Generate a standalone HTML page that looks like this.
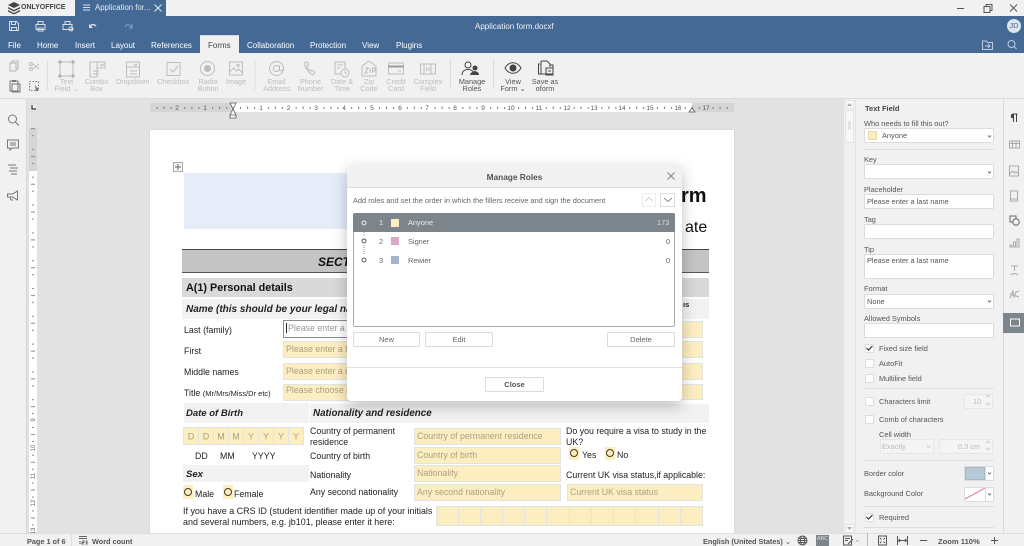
<!DOCTYPE html>
<html><head><meta charset="utf-8"><title>Application form.docxf</title>
<style>
html,body{margin:0;padding:0;width:1024px;height:546px;overflow:hidden;background:#e2e2e2}
#r{position:relative;width:1024px;height:546px;overflow:hidden;font-family:"Liberation Sans",sans-serif;font-size:7.400px;color:#444;filter:blur(.25px)}
.a{position:absolute}
.t{position:absolute;white-space:nowrap;line-height:10px}
.c{text-align:center}
.w{color:#fff}
.m{font-size:8px;color:#fff;top:41px}
.d{color:#bdbdbd}
.l{color:#555;margin-top:1px}
.tb{line-height:7px;font-size:7.300px;top:78px;margin-top:0}
.b{position:absolute;background:#fff;border:1px solid #dcdcdc;box-sizing:border-box;border-radius:1px}
.f{position:absolute;background:#fdeec2;box-sizing:border-box;border:1px solid #dfe6df;color:#aaa082;font-size:8.800px;line-height:15px;padding-left:2px;white-space:nowrap;overflow:hidden}
.x{font-size:8.800px;color:#222;margin-top:1px}
.cb{position:absolute;width:9px;height:9px;background:#fff;border:1px solid #ddd;box-sizing:border-box;border-radius:1px}
.hr{position:absolute;left:864px;width:130px;height:1px;background:#dedede}
.rd{position:absolute;background:#fdeec2}
.rd i{position:absolute;left:1px;top:3px;width:8px;height:8px;border:1px solid #443d20;border-radius:50%;box-sizing:border-box}
.btn{position:absolute;background:#fff;border:1px solid #dcdcdc;box-sizing:border-box;border-radius:1px;text-align:center;font-size:7.500px;line-height:13px;color:#666}
.s{font-size:7.300px;font-weight:bold;color:#555;top:537px}
svg{position:absolute;overflow:visible}
</style></head><body><div id="r">

<!-- top bar -->
<div class="a" style="left:0;top:0;width:1024px;height:16px;background:#f1f1f1"></div>
<div class="a" style="left:0;top:16px;width:1024px;height:37px;background:#446995"></div>
<div class="a" style="left:75px;top:0;width:91px;height:16px;background:#446995"></div>
<svg style="left:8px;top:2px" width="12" height="12" fill="#444"><path d="M6 0L12 3 6 6 0 3z"/><path d="M0 5l6 3 6-3v1.500L6 9.500 0 6.500z"/><path d="M0 8l6 3 6-3v1.500L6 12.500 0 9.500z"/></svg>
<div class="t" style="left:21px;top:3px;font-size:7px;font-weight:bold;color:#444">ONLYOFFICE</div>
<svg style="left:83px;top:4px" width="7" height="7" stroke="#d5dfea" fill="none"><path d="M0 1h7M0 3.500h7M0 6h7"/></svg>
<div class="t w" style="left:95px;top:3px;font-size:7.800px;color:#e4ebf3">Application for...</div>
<svg style="left:154px;top:3.500px" width="8" height="8" stroke="#dfe7f0" fill="none"><path d="M.5.5l7 7M7.500.5l-7 7"/></svg>
<svg style="left:957px;top:4px" width="60" height="10" stroke="#555" fill="none"><path d="M0 4.500h7"/><path d="M27 2.500h6v6h-6zM29 2.500v-2h6v6h-2"/><path d="M53 .5l7 7M60 .5l-7 7"/></svg>

<!-- quick access icons -->
<svg style="left:9px;top:21px" width="125" height="11" stroke="#d7e0ea" fill="none" stroke-width="1"><path d="M.5.5h7l2 2v7H.5z"/><path d="M2.500.5v3h4v-3M2.500 9.500v-3h5v3"/><path d="M27 3.500h9v5h-9zM29 3.500V.5h5v3M29 7h5v3h-5z"/><path d="M54 3.500h9v5h-9zM56 3.500V.5h5v3"/><circle cx="62" cy="8" r="2"/><path d="M81 6c1-3 4-3 6-1" stroke-width="1.500"/><path d="M80 3v4h4" stroke="none" fill="#d7e0ea"/><path d="M116 6c1-3 4-3 6 0" stroke="#8ba3bf"/><path d="M123 3v4h-3" stroke="#8ba3bf"/></svg>
<div class="t w" style="left:475px;top:22px;font-size:8px;color:#eef2f6">Application form.docxf</div>
<div class="a" style="left:1007px;top:19px;width:14px;height:14px;border-radius:50%;background:#dde4ee;color:#446995;font-size:7.500px;line-height:14px;text-align:center">JD</div>

<!-- menu -->
<div class="t m" style="left:8px">File</div>
<div class="t m" style="left:37px">Home</div>
<div class="t m" style="left:75px">Insert</div>
<div class="t m" style="left:111px">Layout</div>
<div class="t m" style="left:151px">References</div>
<div class="a" style="left:200px;top:35px;width:39px;height:18px;background:#f1f1f1;border-top:1px solid #cfd8e3;box-sizing:border-box"></div>
<div class="t m" style="left:208px;color:#444">Forms</div>
<div class="t m" style="left:247px">Collaboration</div>
<div class="t m" style="left:310px">Protection</div>
<div class="t m" style="left:362px">View</div>
<div class="t m" style="left:396px">Plugins</div>
<svg style="left:982px;top:40px" width="40" height="10" stroke="#bfcddd" fill="none"><path d="M.5 1h4l1 1.500h5v7H.5z"/><path d="M3 6h5M6 4l2 2-2 2"/><circle cx="29.500" cy="4" r="3.500"/><path d="M32 6.500l2.500 2.500"/></svg>

<!-- toolbar -->
<div class="a" style="left:0;top:53px;width:1024px;height:45px;background:#f1f1f1;border-bottom:1px solid #dcdcdc;box-sizing:content-box"></div>
<svg style="left:0;top:53px" width="620" height="45" fill="none" stroke="#bdbdbd">
<path d="M10 10h6v8h-6zM12 10V8h6v8h-2" stroke="#b5b5b5"/>
<circle cx="31" cy="11" r="1.500"/><circle cx="31" cy="16" r="1.500"/><path d="M33 11l6 5M33 16l6-5"/>
<path d="M10 28h8v10h-8z" stroke="#777"/><path d="M12 31h8v8h-8z" stroke="#777"/><path d="M12 27h4v2h-4z" fill="#777" stroke="none"/>
<path d="M29.500 28.500h9v9h-9z" stroke="#777" stroke-dasharray="1.500 1.500"/><path d="M35 32l4 5-2 0-1 2z" fill="#777" stroke="none"/>
<path d="M47.500 8v29" stroke="#dedede"/>
<path d="M60 9h13v14H60z"/><path d="M58 9h4M71 9h4M58 23h4M71 23h4M60 7v4M73 7v4M60 21v4M73 21v4" stroke="#999"/>
<path d="M90 9h15v6h-8v9h-7zM97 9v6M100 11l2 2 2-2" />
<path d="M93 18h6M93 21h6"/>
<path d="M126.500 9h13v15h-13zM126.500 14h13M130 18h7M130 21h7M134 11l1.500 1.500 1.500-1.500"/>
<path d="M167 9.500h13v13h-13z"/><path d="M170 16l3 3 5-6"/>
<circle cx="207.500" cy="15.500" r="7"/><circle cx="207.500" cy="15.500" r="3" fill="#bdbdbd"/>
<path d="M229.500 9h13v13h-13zM229.500 19l4-4 3 3 2-2 4 4"/><circle cx="238" cy="12.500" r="1.200"/>
<path d="M255 8v29" stroke="#dedede"/>
<circle cx="276.500" cy="15.500" r="7"/><circle cx="276.500" cy="15.500" r="3"/><path d="M279.500 12.500v4c0 2 3 2 3-.5"/>
<path d="M305 9c-1 3 1 9 8 13l2-2.500-3-2.500-1.500 1c-2-1-3-3-3.500-5l1.500-1-1-3z"/>
<path d="M335 9h10v12h-10zM337 12h6M337 15h3"/><circle cx="345" cy="20" r="4" fill="#f1f1f1"/><path d="M345 18v2h2"/>
<path d="M362 13l7-5 7 5v10h-14z"/><path d="M365 15h3l-3 5h3M370 15v5M372.500 20v-5h1.500a1 1 0 0 1 0 3h-1.500"/>
<path d="M388.500 10h15v11h-15z"/><path d="M388.500 13.500h15" stroke-width="2" stroke="#999"/><path d="M398 18h3"/>
<path d="M420.500 11h15v10h-15zM424 11v10M431 11v10M426.500 14v4M429 14v4"/>
<path d="M450.500 6v30M493.500 6v30" stroke="#dedede"/>
<circle cx="468" cy="12" r="3" stroke="#444"/><path d="M462 22c0-7 10-7 12-2" stroke="#444"/><circle cx="475" cy="15" r="2.500" fill="#444" stroke="none"/><path d="M470 22c1-5 9-5 9 0z" fill="#444" stroke="none"/>
<path d="M505 15c4-7 12-7 16 0-4 7-12 7-16 0z" stroke="#444"/><circle cx="513" cy="15" r="3" fill="#444" stroke="#444"/>
<path d="M541 8h6l3 3v3M540 11h-1.500v10h3M541 8v13h12V12h-3" stroke="#444"/><path d="M546 15h7v7h-7zM548 18h3" stroke="#444"/>
</svg>
<div class="t c d tb" style="left:50px;width:33px">Text<br>Field ⌄</div>
<div class="t c d tb" style="left:80px;width:33px">Combo<br>Box</div>
<div class="t d" style="left:116px;top:77px;font-size:7.300px">Dropdown</div>
<div class="t d" style="left:157px;top:77px;font-size:7.300px">Checkbox</div>
<div class="t c d tb" style="left:192px;width:32px">Radio<br>Button</div>
<div class="t d" style="left:226px;top:77px;font-size:7.300px">Image</div>
<div class="t c d tb" style="left:260px;width:33px">Email<br>Address</div>
<div class="t c d tb" style="left:293px;width:35px">Phone<br>Number</div>
<div class="t c d tb" style="left:325px;width:34px">Date &amp;<br>Time</div>
<div class="t c d tb" style="left:354px;width:30px">Zip<br>Code</div>
<div class="t c d tb" style="left:381px;width:30px">Credit<br>Card</div>
<div class="t c d tb" style="left:410px;width:36px">Complex<br>Field</div>
<div class="t c l tb" style="left:454px;width:36px">Manage<br>Roles</div>
<div class="t c l tb" style="left:497px;width:32px">View<br>Form ⌄</div>
<div class="t c l tb" style="left:527px;width:36px">Save as<br>oform</div>

<!-- left bar -->
<div class="a" style="left:0;top:99px;width:26px;height:434px;background:#f1f1f1;border-right:1px solid #d8d8d8"></div>
<svg style="left:7px;top:114px" width="14" height="90" fill="none" stroke="#777"><circle cx="5.500" cy="5" r="4"/><path d="M8.500 8l3.500 3.500"/><path d="M.5 26h11v8H5l-2 2v-2H.5zM3 29h6M3 31h6"/><path d="M1 51h8M3 54h8M2 57h8M4 60h6"/><path d="M.5 80h5l5-3v9l-5-3h-5zM3 83l1 3h2"/></svg>

<!-- ruler top -->
<div class="a" style="left:29px;top:103px;width:9px;height:9px;background:#eaeaea;border:1px solid #ddd;box-sizing:border-box"></div>
<svg style="left:31px;top:105px" width="5" height="5" stroke="#333" fill="none" stroke-width="1.200"><path d="M1 0v4h4"/></svg>
<div class="a" style="left:150px;top:103px;width:584px;height:9px;background:#d5d5d5"></div>
<div class="a" style="left:233px;top:103px;width:459px;height:9px;background:#fff"></div>
<svg style="left:150px;top:103px" width="584" height="16" font-family="Liberation Sans" font-size="6.500" fill="#555" text-anchor="middle">
<defs><pattern id="tk" width="27.800" height="9" patternUnits="userSpaceOnUse" x="83"><rect x="7" y="4" width="1" height="2" fill="#777"/><rect x="14" y="3.500" width="1" height="2.500" fill="#777"/><rect x="21" y="4" width="1" height="2" fill="#777"/></pattern></defs>
<rect width="584" height="9" fill="url(#tk)"/>
<text x="27" y="7">2</text><text x="55" y="7">1</text><text x="111" y="7">1</text><text x="138.500" y="7">2</text><text x="166" y="7">3</text><text x="194" y="7">4</text><text x="222" y="7">5</text><text x="250" y="7">6</text><text x="277" y="7">7</text><text x="305" y="7">8</text><text x="333" y="7">9</text><text x="361" y="7">10</text><text x="389" y="7">11</text><text x="417" y="7">12</text><text x="444" y="7">13</text><text x="472" y="7">14</text><text x="500" y="7">15</text><text x="528" y="7">16</text><text x="556" y="7">17</text>
<path d="M80 0h6l-3 6zM80 12l3-6 3 6zM80 12h6v3h-6zM539 9l3-4 3 4z" fill="#fff" stroke="#555" stroke-width=".8"/>
</svg>
<!-- ruler left -->
<div class="a" style="left:29px;top:128px;width:8px;height:404px;background:#fff"></div>
<div class="a" style="left:29px;top:128px;width:8px;height:43px;background:#d5d5d5"></div>
<svg style="left:29px;top:128px" width="8" height="404" font-family="Liberation Sans" font-size="6" fill="#666" text-anchor="middle">
<defs><pattern id="tv" width="8" height="27.800" patternUnits="userSpaceOnUse" y="14"><rect x="3" y="7" width="2" height="1" fill="#888"/><rect x="2" y="14" width="4" height="1" fill="#888"/><rect x="3" y="21" width="2" height="1" fill="#888"/></pattern></defs>
<rect width="8" height="404" fill="url(#tv)"/>
<text transform="translate(6,292) rotate(-90)">9</text><text transform="translate(6,320) rotate(-90)">10</text><text transform="translate(6,348) rotate(-90)">11</text><text transform="translate(6,375) rotate(-90)">12</text><text transform="translate(6,403) rotate(-90)">13</text>
</svg>

<!-- page -->
<div class="a" style="left:150px;top:130px;width:584px;height:403px;background:#fff;box-shadow:0 0 1px #bbb"></div>
<div class="a" style="left:173px;top:162px;width:10px;height:10px;border:1px solid #aaa;box-sizing:border-box;background:#f6f6f6"></div>
<svg style="left:175px;top:164px" width="6" height="6" stroke="#666"><path d="M3 0v6M0 3h6"/></svg>
<div class="a" style="left:184px;top:173px;width:200px;height:56px;background:#e6edf9"></div>
<div class="t" style="left:681px;top:184px;font-size:20px;line-height:24px;font-weight:bold;color:#111">rm</div>
<div class="t" style="left:685px;top:218px;font-size:16px;line-height:20px;color:#111">ate</div>
<div class="a" style="left:182px;top:249px;width:527px;height:24px;background:#c4c4c4;border-top:1px solid #444;border-bottom:1px solid #555;box-sizing:border-box"></div>
<div class="t" style="left:318px;top:256px;font-size:12px;line-height:12px;font-weight:bold;font-style:italic;color:#111">SECT</div>
<div class="a" style="left:182px;top:278px;width:527px;height:19px;background:#d9d9d9"></div>
<div class="t" style="left:186px;top:282px;font-size:10.800px;line-height:13px;font-weight:bold;color:#111">A(1) Personal details</div>
<div class="a" style="left:182px;top:299px;width:527px;height:20px;background:#f2f2f2"></div>
<div class="t" style="left:186px;top:305px;font-size:10px;font-weight:bold;font-style:italic;color:#222">Name (this should be your legal na</div>
<div class="t" style="left:683px;top:300px;font-size:7.500px;font-weight:bold;color:#222">ıs</div>
<div class="t x" style="left:184px;top:324px">Last (family)</div>
<div class="t x" style="left:184px;top:345px">First</div>
<div class="t x" style="left:184px;top:366px">Middle names</div>
<div class="t x" style="left:184px;top:387px">Title <span style="font-size:7.500px">(Mr/Mrs/Miss/Dr etc)</span></div>
<div class="f" style="left:283px;top:320px;width:70px;height:18px;background:#fff;border-color:#8a9098;color:#999"><span style="border-left:1px solid #222;padding-left:1px">Please enter a last name</span></div>
<div class="f" style="left:283px;top:341px;width:70px;height:17px">Please enter a first name</div>
<div class="f" style="left:283px;top:363px;width:70px;height:17px">Please enter a middle name</div>
<div class="f" style="left:283px;top:384px;width:70px;height:17px;line-height:11px">Please choose a title</div>
<div class="f" style="left:680px;top:321px;width:23px;height:17px"></div>
<div class="f" style="left:680px;top:341px;width:23px;height:17px"></div>
<div class="f" style="left:680px;top:363px;width:23px;height:17px"></div>
<div class="f" style="left:680px;top:384px;width:23px;height:16px"></div>

<div class="a" style="left:184px;top:403px;width:125px;height:20px;background:#f2f2f2"></div>
<div class="a" style="left:310px;top:404px;width:399px;height:19px;background:#f2f2f2"></div>
<div class="t" style="left:186px;top:409px;font-size:9.500px;font-weight:bold;font-style:italic;color:#222">Date of Birth</div>
<div class="t" style="left:313px;top:409px;font-size:9.800px;font-weight:bold;font-style:italic;color:#222">Nationality and residence</div>
<!-- DOB cells -->
<svg style="left:183px;top:427px" width="121" height="18" font-family="Liberation Sans" font-size="9" fill="#aaa082" text-anchor="middle"><rect x=".5" y=".5" width="120" height="17" fill="#fdeec2" stroke="#dfe6df"/><path d="M15.500 0v18M30.500 0v18M45.500 0v18M60.500 0v18M75.500 0v18M90.500 0v18M105.500 0v18" stroke="#dfe6df"/><text x="8" y="12.500">D</text><text x="23" y="12.500">D</text><text x="38" y="12.500">M</text><text x="53" y="12.500">M</text><text x="68" y="12.500">Y</text><text x="83" y="12.500">Y</text><text x="98" y="12.500">Y</text><text x="113" y="12.500">Y</text></svg>
<div class="t x" style="left:195px;top:450px">DD</div><div class="t x" style="left:220px;top:450px">MM</div><div class="t x" style="left:252px;top:450px">YYYY</div>
<div class="a" style="left:183px;top:465px;width:126px;height:17px;background:#f2f2f2"></div>
<div class="t" style="left:186px;top:470px;font-size:9.500px;font-weight:bold;font-style:italic;color:#222">Sex</div>
<div class="rd" style="left:183px;top:485px;width:10px;height:14px"><i></i></div><div class="t x" style="left:195px;top:488px">Male</div>
<div class="rd" style="left:223px;top:485px;width:10px;height:14px"><i></i></div><div class="t x" style="left:234px;top:488px">Female</div>
<div class="t x" style="left:310px;top:425px;line-height:11px;white-space:normal;width:100px">Country of permanent residence</div>
<div class="t x" style="left:310px;top:450px">Country of birth</div>
<div class="t x" style="left:310px;top:469px">Nationality</div>
<div class="t x" style="left:310px;top:486px">Any second nationality</div>
<div class="f" style="left:414px;top:428px;width:147px;height:17px">Country of permanent residence</div>
<div class="f" style="left:414px;top:447px;width:147px;height:17px">Country of birth</div>
<div class="f" style="left:414px;top:465px;width:147px;height:17px">Nationality</div>
<div class="f" style="left:414px;top:484px;width:147px;height:17px">Any second nationality</div>
<div class="t x" style="left:566px;top:425px;line-height:11px">Do you require a visa to study in the<br>UK?</div>
<div class="rd" style="left:569px;top:447px;width:10px;height:13px"><i style="top:2px"></i></div><div class="t x" style="left:582px;top:449px">Yes</div>
<div class="rd" style="left:605px;top:447px;width:10px;height:13px"><i style="top:2px"></i></div><div class="t x" style="left:617px;top:449px">No</div>
<div class="t x" style="left:566px;top:469px">Current UK visa status,if applicable:</div>
<div class="f" style="left:567px;top:484px;width:136px;height:17px">Current UK visa status</div>
<div class="t x" style="left:183px;top:505px;line-height:10.500px;font-size:8.950px">If you have a CRS ID (student identifier made up of your initials<br>and several numbers, e.g. jb101, please enter it here:</div>
<svg style="left:436px;top:506px" width="267" height="20"><rect x=".5" y=".5" width="266" height="19" fill="#fdeec2" stroke="#dfe6df"/><path d="M22.500 0v20M44.500 0v20M66.500 0v20M88.500 0v20M110.500 0v20M133.500 0v20M155.500 0v20M177.500 0v20M199.500 0v20M222.500 0v20M244.500 0v20" stroke="#dfe6df"/></svg>

<!-- scrollbar -->
<div class="a" style="left:844px;top:99px;width:11px;height:434px;background:#f1f1f1"></div>
<div class="a" style="left:845px;top:100px;width:9px;height:9px;background:#f8f8f8;border:1px solid #e4e4e4;box-sizing:border-box"></div>
<div class="a" style="left:845px;top:110px;width:9px;height:33px;background:#f8f8f8;border:1px solid #e4e4e4;box-sizing:border-box"></div>
<div class="a" style="left:848px;top:121px;width:3px;height:9px;background:#e2e2e2"></div>
<div class="a" style="left:845px;top:524px;width:9px;height:9px;background:#f8f8f8;border:1px solid #e4e4e4;box-sizing:border-box"></div>
<svg style="left:847px;top:103px" width="5" height="428" fill="#aaa"><path d="M2.500 0L5 3H0zM0 424h5l-2.500 3z"/></svg>

<!-- right panel -->
<div class="a" style="left:855px;top:99px;width:148px;height:434px;background:#f1f1f1;border-left:1px solid #e2e2e2;box-sizing:border-box"></div>
<div class="a" style="left:1003px;top:99px;width:21px;height:434px;background:#f1f1f1;border-left:1px solid #d8d8d8;box-sizing:border-box"></div>
<div class="t" style="left:865px;top:104px;font-weight:bold;font-size:7.500px;color:#444">Text Field</div>
<div class="t l" style="left:864px;top:118px">Who needs to fill this out?</div>
<div class="b" style="left:864px;top:128px;width:130px;height:15px"></div>
<div class="a" style="left:868px;top:131px;width:9px;height:9px;background:#fdeec2;border:1px solid #e4d9b0;box-sizing:border-box"></div>
<div class="t l" style="left:882px;top:130px">Anyone</div>
<div class="hr" style="top:149px"></div>
<div class="t l" style="left:864px;top:154px">Key</div>
<div class="b" style="left:864px;top:164px;width:130px;height:15px"></div>
<div class="t l" style="left:864px;top:184px">Placeholder</div>
<div class="b" style="left:864px;top:194px;width:130px;height:15px"></div>
<div class="t l" style="left:867px;top:196px">Please enter a last name</div>
<div class="t l" style="left:864px;top:214px">Tag</div>
<div class="b" style="left:864px;top:224px;width:130px;height:15px"></div>
<div class="t l" style="left:864px;top:244px">Tip</div>
<div class="b" style="left:864px;top:254px;width:130px;height:25px"></div>
<div class="t l" style="left:867px;top:255px">Please enter a last name</div>
<div class="t l" style="left:864px;top:283px">Format</div>
<div class="b" style="left:864px;top:294px;width:130px;height:15px"></div>
<div class="t l" style="left:867px;top:296px">None</div>
<div class="t l" style="left:864px;top:313px">Allowed Symbols</div>
<div class="b" style="left:864px;top:323px;width:130px;height:15px"></div>
<div class="cb" style="left:865px;top:344px"></div><div class="t l" style="left:879px;top:343px">Fixed size field</div>
<div class="cb" style="left:865px;top:359px"></div><div class="t l" style="left:879px;top:358px">AutoFit</div>
<div class="cb" style="left:865px;top:374px"></div><div class="t l" style="left:879px;top:373px">Multiline field</div>
<div class="hr" style="top:388px"></div>
<div class="cb" style="left:865px;top:397px"></div><div class="t l" style="left:879px;top:396px">Characters limit</div>
<div class="b" style="left:964px;top:394px;width:29px;height:15px;background:#f4f4f4;border-color:#e6e6e6"></div>
<div class="t" style="left:973px;top:397px;color:#bbb">10</div>
<div class="cb" style="left:865px;top:415px"></div><div class="t l" style="left:879px;top:414px">Comb of characters</div>
<div class="t l" style="left:879px;top:429px">Cell width</div>
<div class="b" style="left:880px;top:439px;width:54px;height:15px;background:#f4f4f4;border-color:#e6e6e6"></div>
<div class="t" style="left:882px;top:442px;color:#bbb">Exactly</div>
<div class="b" style="left:939px;top:439px;width:54px;height:15px;background:#f4f4f4;border-color:#e6e6e6"></div>
<div class="t" style="left:958px;top:442px;color:#bbb">0.3 cm</div>
<div class="hr" style="top:460px"></div>
<div class="t l" style="left:864px;top:468px">Border color</div>
<div class="b" style="left:964px;top:466px;width:30px;height:15px"></div>
<div class="a" style="left:965px;top:467px;width:20px;height:13px;background:#b4cbd3;border:1px solid #a6bcc4;box-sizing:border-box"></div>
<div class="t l" style="left:864px;top:488px">Background Color</div>
<div class="b" style="left:964px;top:487px;width:30px;height:15px"></div>
<div class="hr" style="top:506px"></div>
<div class="cb" style="left:865px;top:513px"></div><div class="t l" style="left:879px;top:512px">Required</div>
<div class="hr" style="top:527px"></div>
<svg style="left:865px;top:130px" width="130" height="395" fill="none" stroke="#555">
<path d="M1.500 218l2 2 4-4M1.500 387l2 2 4-4" stroke="#333" stroke-width="1.200"/>
<path d="M100 369l20-11" stroke="#e8607a" stroke-width=".9"/>
<path d="M120.500 336v15M120.500 357v14" stroke="#ddd"/>
<g stroke="#777"><path d="M123 5.500l1.500 1.500L126 5.500M123 41.500l1.500 1.500L126 41.500M123 170.500l1.500 1.500L126 170.500M123 342.500l1.500 1.500 1.500-1.500M123 363.500l1.500 1.500 1.500-1.500"/></g>
<g stroke="#ccc"><path d="M62 316l1.500 1.500L65 316M121 267l2-2 2 2M121 273l2 2 2-2M121 313l2-2 2 2M121 318l2 2 2-2"/></g>
</svg>
<!-- right icons -->
<div class="a" style="left:1003px;top:313px;width:21px;height:20px;background:#7d858c"></div>
<svg style="left:1009px;top:113px" width="12" height="220" fill="none" stroke="#aaa">
<path d="M4.500 1h4M4.500 1c-3 0-3 4 0 4zM4.500 1v8M7.500 1v8" stroke="#444" fill="#444"/>
<path d="M.5 28h10v7H.5zM.5 30.500h10M3.500 28v7M7 28v7"/>
<path d="M.5 53h9v10h-9zM.5 61l3-3 2 2 1.500-1.500 2.500 2.500"/>
<path d="M1.500 78h7v10h-7zM1.500 86h7"/>
<path d="M1 103h6v6H1z" stroke="#666"/><circle cx="7" cy="109" r="3.200" stroke="#666" fill="#f1f1f1"/>
<path d="M1 134v-2h2v2zM4.500 134v-5h2v5zM8 134v-8h2v8z"/>
<path d="M2 153h7M5.500 153v5M2 162c2-2 5-2 7 0"/>
<path d="M1 185l3-7 1 6 2-5 3-1M1 181l9 3"/>
<path d="M1.500 206h9v7h-9z" stroke="#fff"/>
</svg>

<!-- dialog -->
<div class="a" style="left:347px;top:165px;width:335px;height:236px;background:#fff;border-radius:4px;box-shadow:0 5px 15px rgba(0,0,0,.25);overflow:hidden">
 <div class="a" style="left:0;top:0;width:335px;height:22px;background:#f1f1f1;border-bottom:1px solid #dcdcdc;box-sizing:content-box"></div>
 <div class="t c" style="left:0;top:7px;width:335px;font-size:8.300px;font-weight:bold;color:#555">Manage Roles</div>
 <svg style="left:320px;top:7px" width="8" height="8" stroke="#888" fill="none"><path d="M.5.5l7 7M7.500.5l-7 7"/></svg>
 <div class="t" style="left:6px;top:31px;color:#666">Add roles and set the order in which the fillers receive and sign the document</div>
 <div class="a" style="left:295px;top:28px;width:14px;height:14px;border:1px solid #eee;box-sizing:border-box"></div>
 <div class="a" style="left:313px;top:28px;width:15px;height:14px;border:1px solid #ddd;box-sizing:border-box"></div>
 <svg style="left:298px;top:32px" width="27" height="6" fill="none"><path d="M0 4l4-3.500L8 4" stroke="#ccc"/><path d="M19 1l4 3.500L27 1" stroke="#888"/></svg>
 <div class="a" style="left:6px;top:48px;width:322px;height:114px;border:1px solid #aaa;border-radius:2px;box-sizing:border-box"></div>
 <div class="a" style="left:6px;top:48px;width:322px;height:19px;background:#7d858c;border-radius:2px 2px 0 0"></div>
 <svg style="left:14px;top:55px" width="6" height="45" fill="none"><path d="M3 6v10M3 25v10" stroke="#888" stroke-dasharray="1 1"/><circle cx="3" cy="3" r="2" stroke="#eee"/><circle cx="3" cy="21" r="2" stroke="#555"/><circle cx="3" cy="40" r="2" stroke="#555"/></svg>
 <div class="t w" style="left:32px;top:52.500px;color:#eee">1</div>
 <div class="a" style="left:44px;top:54px;width:8px;height:8px;background:#fdeec2"></div>
 <div class="t w" style="left:61px;top:52.500px;color:#eee">Anyone</div>
 <div class="t w" style="left:310px;top:52.500px;color:#ddd">173</div>
 <div class="t" style="left:32px;top:71.500px;color:#666">2</div>
 <div class="a" style="left:44px;top:72px;width:8px;height:8px;background:#d8a9c5"></div>
 <div class="t" style="left:61px;top:71.500px;color:#666">Signer</div>
 <div class="t" style="left:319px;top:71.500px;color:#666">0</div>
 <div class="t" style="left:32px;top:90.500px;color:#666">3</div>
 <div class="a" style="left:44px;top:91px;width:8px;height:8px;background:#a3b4cf"></div>
 <div class="t" style="left:61px;top:90.500px;color:#666">Rewier</div>
 <div class="t" style="left:319px;top:90.500px;color:#666">0</div>
 <div class="btn" style="left:6px;top:167px;width:67px;height:15px">New</div>
 <div class="btn" style="left:78px;top:167px;width:68px;height:15px">Edit</div>
 <div class="btn" style="left:260px;top:167px;width:68px;height:15px">Delete</div>
 <div class="a" style="left:0;top:202px;width:335px;height:1px;background:#e2e2e2"></div>
 <div class="btn" style="left:138px;top:212px;width:59px;height:15px;font-weight:bold;color:#555">Close</div>
</div>

<!-- status bar -->
<div class="a" style="left:0;top:533px;width:1024px;height:13px;background:#f1f1f1;border-top:1px solid #dedede;box-sizing:border-box"></div>
<div class="t s" style="left:27px">Page 1 of 6</div>
<div class="a" style="left:71px;top:534px;width:1px;height:12px;background:#ddd"></div>
<svg style="left:79px;top:536px" width="9" height="9" stroke="#666" fill="none"><path d="M0 .5h8M0 2.500h8"/><path d="M1 5v3M3 5h2v1.500H3V8h2M6.500 5H8v3H6.500M7 6.500h1"/></svg>
<div class="t s" style="left:92px">Word count</div>
<div class="t s" style="left:703px">English (United States) <span style="font-weight:normal">⌄</span></div>
<svg style="left:797px;top:535px" width="11" height="11" stroke="#555" fill="none"><circle cx="5.500" cy="5.500" r="4.500"/><ellipse cx="5.500" cy="5.500" rx="2" ry="4.500"/><path d="M1 5.500h9M1.500 3.500h8M1.500 7.500h8"/></svg>
<div class="a" style="left:816px;top:535px;width:13px;height:11px;background:#7d858c;color:#dde;font-size:5.500px;line-height:9px;text-align:center;overflow:hidden">ABC</div>
<svg style="left:843px;top:535px" width="180" height="11" fill="none" stroke="#555">
<path d="M.5 1h8v9h-8zM2 3.500h5M2 5.500h3M5 9l5-5" />
<path d="M13 5l1.500 1.500L16 5M24.500 -2v13" stroke="#bbb"/>
<path d="M35.500 1h8v9h-8zM37 3l1.500 1.500M42 3l-1.500 1.500M37 8l1.500-1.500M42 8l-1.500-1.500"/>
<path d="M54.500 1v9M64.500 1v9M56 5.500h7M57 4l-1.500 1.500L57 7M62 4l1.500 1.500L62 7"/>
<path d="M77 5.500h7"/><path d="M148 5.500h7M151.500 2v7"/>
</svg>
<div class="t s" style="left:938px;font-size:7.600px">Zoom 110%</div>

</div></body></html>
